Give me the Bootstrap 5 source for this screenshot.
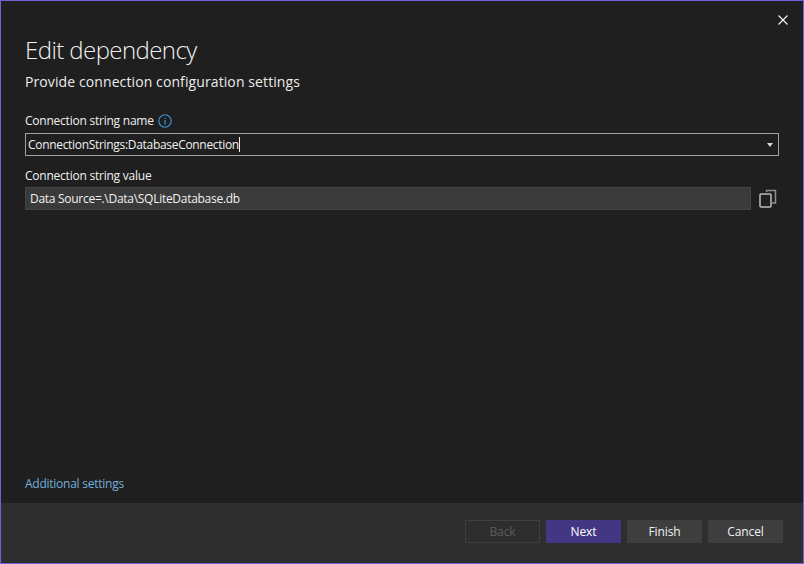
<!DOCTYPE html>
<html lang="en">
<head>
<meta charset="utf-8">
<title>Edit dependency</title>
<link rel="stylesheet" href="https://cdn.jsdelivr.net/npm/bootstrap@5.3.0/dist/css/bootstrap.min.css">
<style>
html,body{height:100%;margin:0;background:#1f1f1f;overflow:hidden}
body{font-family:"Open Sans","Noto Sans",sans-serif;font-size:12px;color:#f1f1f1}
.dlg{height:564px;border:1px solid #6f62d8;background:#1f1f1f}
.dlg-main{padding:0 24px;position:relative}
.dlg-close{position:absolute;top:13px;right:14px;width:12px;height:12px;line-height:0}
.dlg-title{font-size:24px;font-weight:300;line-height:32px;margin:33px 0 0;color:#f1f1f1;letter-spacing:-.58px}
.dlg-sub{font-size:14px;line-height:20px;margin:6px 0 0;color:#ececec;letter-spacing:.1px}
.fld-label{font-size:12px;line-height:16px;color:#f1f1f1;letter-spacing:-.23px}
.first-label{margin-top:21px}
.info{margin-left:4px}
.combo{height:23px;border:1px solid #a0a0a0;margin-top:4px;padding:0 5px 0 2px;letter-spacing:-.31px;line-height:21px;background:#1f1f1f}
.caret-bar{display:inline-block;width:1px;height:15px;background:#f1f1f1;vertical-align:-3px}
.arrow{width:0;height:0;border:3px solid transparent;border-top:4px solid #d8d8d8;border-bottom:0}
.value-label{margin-top:12px}
.value-row{margin-top:3px}
.value-box{width:726px;height:23px;background:#3a3a3a;border:1px solid #444;padding:0 4px;line-height:21px;letter-spacing:-.28px;color:#f1f1f1}
.copy-ic{margin-left:8px;display:block}
.adv{font-size:12px;line-height:16px;color:#74aedb;text-decoration:none;letter-spacing:-.25px}
.adv-wrap{padding:0 24px 10px}
.dlg-foot{height:60px;background:#2e2e2e;padding:17px 20px 0 0;gap:6px}
.act{width:75px;height:23px;padding:0;border-radius:0;font-size:12px;line-height:21px;color:#f1f1f1;background:#3e3e3e;border:1px solid #3e3e3e;letter-spacing:-.1px}
.act-next{background:#433784;border-color:#433784;color:#fff}
.act:disabled{opacity:1;background:transparent;border-color:#3f3f3f;color:#5c5c5c}
</style>
</head>
<body>
<div class="dlg d-flex flex-column">
  <div class="dlg-main flex-grow-1">
    <div class="dlg-close">
      <svg width="12" height="12" viewBox="0 0 12 12"><path d="M1.5 1.5l9 9M10.5 1.5l-9 9" stroke="#f4f4f4" stroke-width="1.2" fill="none"/></svg>
    </div>
    <h1 class="dlg-title">Edit dependency</h1>
    <p class="dlg-sub">Provide connection configuration settings</p>
    <div class="fld-label first-label d-flex align-items-center">Connection string name
      <svg class="info" width="14" height="14" viewBox="0 0 14 14"><circle cx="7" cy="7" r="6.2" fill="none" stroke="#3b9ae0" stroke-width="1.1"/><path d="M7 6v4.5" stroke="#3b9ae0" stroke-width="1.1"/><path d="M7 3.5v1.2" stroke="#3b9ae0" stroke-width="1.1"/></svg>
    </div>
    <div class="combo d-flex justify-content-between align-items-center">
      <span>ConnectionStrings:DatabaseConnection<span class="caret-bar"></span></span>
      <span class="arrow"></span>
    </div>
    <div class="fld-label value-label">Connection string value</div>
    <div class="value-row d-flex align-items-center">
      <div class="value-box">Data Source=.\Data\SQLiteDatabase.db</div>
      <svg class="copy-ic" width="18" height="20" viewBox="0 0 18 20"><path d="M7.5 3V1.5h9V14H13" fill="none" stroke="#8f8f8f" stroke-width="1.5" stroke-linejoin="round"/><rect x="1" y="5" width="11" height="13" rx="1" fill="#1f1f1f" stroke="#bcbcbc" stroke-width="1.5"/></svg>
    </div>
  </div>
  <div class="adv-wrap"><a class="adv" href="#">Additional settings</a></div>
  <div class="dlg-foot d-flex justify-content-end align-items-start">
    <button class="btn act" disabled>Back</button>
    <button class="btn act act-next">Next</button>
    <button class="btn act">Finish</button>
    <button class="btn act">Cancel</button>
  </div>
</div>
</body>
</html>
